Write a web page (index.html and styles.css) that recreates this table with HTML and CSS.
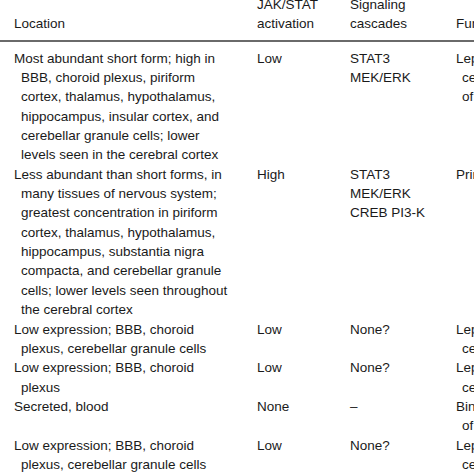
FILE: index.html
```html
<!DOCTYPE html>
<html>
<head>
<meta charset="utf-8">
<link rel="stylesheet" href="styles.css">
</head>
<body>
<div class="page">
<table class="tbl">
  <colgroup>
    <col class="c-loc">
    <col class="c-jak">
    <col class="c-sig">
    <col class="c-fun">
  </colgroup>
  <thead>
    <tr>
      <th class="h-loc">Location</th>
      <th>JAK/STAT<br>activation</th>
      <th>Signaling<br>cascades</th>
      <th>Function</th>
    </tr>
  </thead>
  <tbody>
    <tr class="first">
      <td class="loc">Most abundant short form; high in<br>BBB, choroid plexus, piriform<br>cortex, thalamus, hypothalamus,<br>hippocampus, insular cortex, and<br>cerebellar granule cells; lower<br>levels seen in the cerebral cortex</td>
      <td>Low</td>
      <td>STAT3<br>MEK/ERK</td>
      <td class="fun">Leptin transport into<br>cerebrospinal fluid;<br>of leptin across BBB</td>
    </tr>
    <tr>
      <td class="loc">Less abundant than short forms, in<br>many tissues of nervous system;<br>greatest concentration in piriform<br>cortex, thalamus, hypothalamus,<br>hippocampus, substantia nigra<br>compacta, and cerebellar granule<br>cells; lower levels seen throughout<br>the cerebral cortex</td>
      <td>High</td>
      <td>STAT3<br>MEK/ERK<br>CREB PI3-K</td>
      <td class="fun">Primary signaling isoform</td>
    </tr>
    <tr>
      <td class="loc">Low expression; BBB, choroid<br>plexus, cerebellar granule cells</td>
      <td>Low</td>
      <td>None?</td>
      <td class="fun">Leptin transport into<br>cerebrospinal fluid</td>
    </tr>
    <tr>
      <td class="loc">Low expression; BBB, choroid<br>plexus</td>
      <td>Low</td>
      <td>None?</td>
      <td class="fun">Leptin transport into<br>cerebrospinal fluid</td>
    </tr>
    <tr>
      <td class="loc">Secreted, blood</td>
      <td>None</td>
      <td>–</td>
      <td class="fun">Binds leptin; regulation<br>of free leptin levels</td>
    </tr>
    <tr>
      <td class="loc">Low expression; BBB, choroid<br>plexus, cerebellar granule cells</td>
      <td>Low</td>
      <td>None?</td>
      <td class="fun">Leptin transport into<br>cerebrospinal fluid</td>
    </tr>
  </tbody>
</table>
</div>
</body>
</html>
```

FILE: styles.css
```css
html, body {
  margin: 0;
  padding: 0;
  background: #ffffff;
}
.page {
  width: 474px;
  height: 474px;
  overflow: hidden;
}
.tbl {
  border-collapse: collapse;
  table-layout: fixed;
  width: 760px;
  margin-top: -5px;
  font-family: "Liberation Sans", Arial, sans-serif;
  font-size: 13.5px;
  line-height: 19.35px;
  color: #1a1a1a;
}
.c-loc { width: 257px; }
.c-jak { width: 93px; }
.c-sig { width: 106px; }
.c-fun { width: 304px; }
.tbl th, .tbl td {
  padding: 0;
  text-align: left;
  font-weight: normal;
  vertical-align: top;
  white-space: nowrap;
}
.tbl th {
  vertical-align: bottom;
  padding-bottom: 6px;
  border-bottom: 2px solid #6a6a6a;
}
.tbl .h-loc {
  padding-left: 14px;
}
.tbl .first td {
  padding-top: 7px;
}
.tbl .loc {
  padding-left: 21px;
  text-indent: -7px;
}
.tbl .fun {
  padding-left: 6px;
  text-indent: -6px;
}
```
